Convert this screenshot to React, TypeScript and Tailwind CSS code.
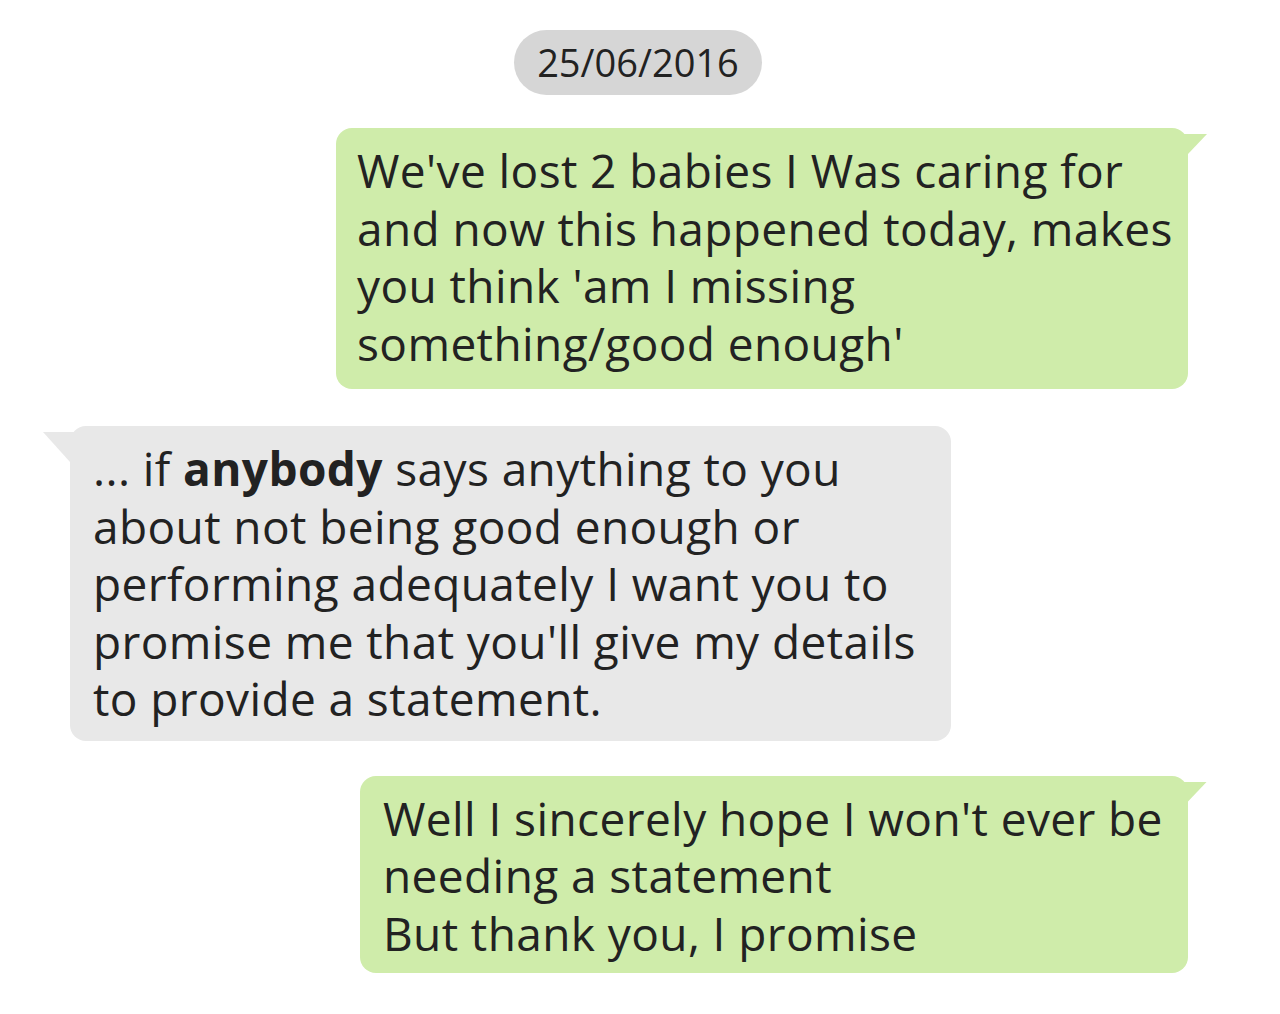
const sent = 'bg-[#cfecaa]';
const received = 'bg-[#e8e8e8]';

function Tail({ side, color }: { side: 'left' | 'right'; color: string }) {
  if (side === 'right') {
    return (
      <span
        className={`absolute -right-[19px] top-[6px] h-[20px] w-[29px] ${color} [clip-path:polygon(0_0,100%_0,10px_100%,0_100%)]`}
      />
    );
  }
  return (
    <span
      className={`absolute -left-[27px] top-[6px] h-[30px] w-[42px] ${color} [clip-path:polygon(0_0,100%_0,100%_100%,27px_100%)]`}
    />
  );
}

export default function App() {
  return (
    <div className="min-h-screen bg-white font-['Open_Sans',sans-serif] text-[#222222]">
      <div className="flex flex-col pl-[70px] pr-[92px] pt-[30px] pb-10">
        {/* date chip */}
        <div className="flex justify-center">
          <div className="ml-[18px] flex h-[65px] items-center rounded-full bg-[#d6d6d6] px-[23px] text-[38px]">
            25/06/2016
          </div>
        </div>

        {/* sent */}
        <div className="mt-[33px] flex justify-end">
          <div className={`relative w-[852px] rounded-[16px] ${sent} pl-[21px] pr-4 pt-[14px] pb-[17px] text-[46px] leading-[57.5px] tracking-[0.4px]`}>
            <Tail side="right" color={sent} />
            <p className="whitespace-nowrap">We've lost 2 babies I Was caring for</p>
            <p className="whitespace-nowrap">and now this happened today, makes</p>
            <p className="whitespace-nowrap">you think 'am I missing</p>
            <p className="whitespace-nowrap">something/good enough'</p>
          </div>
        </div>

        {/* received */}
        <div className="mt-[37px] flex justify-start">
          <div className={`relative w-[881px] rounded-[16px] ${received} pl-[23px] pr-4 pt-[14px] pb-[13px] text-[46px] leading-[57.5px] tracking-[0.4px]`}>
            <Tail side="left" color={received} />
            <p className="whitespace-nowrap">
              ... if <span className="font-bold">anybody</span> says anything to you
            </p>
            <p className="whitespace-nowrap">about not being good enough or</p>
            <p className="whitespace-nowrap">performing adequately I want you to</p>
            <p className="whitespace-nowrap">promise me that you'll give my details</p>
            <p className="whitespace-nowrap">to provide a statement.</p>
          </div>
        </div>

        {/* sent */}
        <div className="mt-[35px] flex justify-end">
          <div className={`relative w-[828px] rounded-[16px] ${sent} pl-[23px] pr-4 pt-[14px] pb-[11px] text-[46px] leading-[57.5px] tracking-[0.4px]`}>
            <Tail side="right" color={sent} />
            <p className="whitespace-nowrap">Well I sincerely hope I won't ever be</p>
            <p className="whitespace-nowrap">needing a statement</p>
            <p className="whitespace-nowrap">But thank you, I promise</p>
          </div>
        </div>
      </div>
    </div>
  );
}
